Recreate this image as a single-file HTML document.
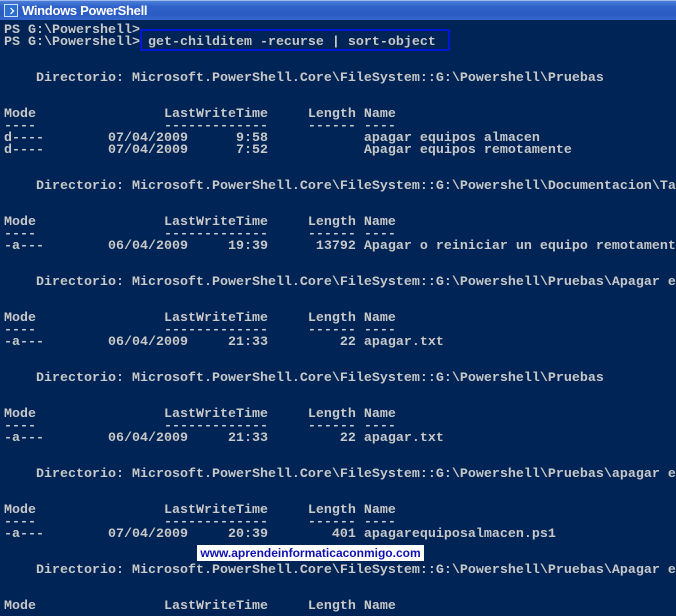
<!DOCTYPE html>
<html><head><meta charset="utf-8"><style>
html,body{margin:0;padding:0;width:676px;height:616px;overflow:hidden;background:#012456;}
#title{position:absolute;left:0;top:0;width:676px;height:20px;background:linear-gradient(180deg,#4a7ed8 0%,#2f62c8 30%,#2a5bc2 70%,#3567cf 100%);border-top:1px solid #9db9eb;box-sizing:border-box;}
#title span{position:absolute;left:22px;top:2px;font:bold 13px "Liberation Sans",sans-serif;color:#fff;letter-spacing:-0.3px;}
#icon{position:absolute;left:4px;top:3px;width:14px;height:13px;background:#2d6fd0;border:1px solid #cfe0ff;box-sizing:border-box;}
#icon:after{content:"";position:absolute;left:2px;top:2px;width:6px;height:6px;border-right:2px solid #fff;border-top:2px solid #fff;transform:rotate(45deg) scale(.6);}
#sep{position:absolute;left:0;top:20px;width:676px;height:2px;background:#b8c4d8;}
pre{position:absolute;left:4px;top:25px;margin:0;font:bold 13.33px/12px "Liberation Mono",monospace;color:#c8c8c8;white-space:pre;}
#box{position:absolute;left:140px;top:29px;width:310px;height:22px;border:2px solid #0018d8;box-sizing:border-box;border-radius:2px;}
#wm{position:absolute;left:197px;top:545px;width:227px;height:16px;background:#fff;font:bold 12px/16px "Liberation Sans",sans-serif;color:#1010b0;text-align:center;}
</style></head><body>
<div id="title"><div id="icon"></div><span>Windows PowerShell</span></div>
<pre>PS G:\Powershell&gt;
PS G:\Powershell&gt; get-childitem -recurse | sort-object


    Directorio: Microsoft.PowerShell.Core\FileSystem::G:\Powershell\Pruebas


Mode                LastWriteTime     Length Name
----                -------------     ------ ----
d----        07/04/2009      9:58            apagar equipos almacen
d----        07/04/2009      7:52            Apagar equipos remotamente


    Directorio: Microsoft.PowerShell.Core\FileSystem::G:\Powershell\Documentacion\Ta


Mode                LastWriteTime     Length Name
----                -------------     ------ ----
-a---        06/04/2009     19:39      13792 Apagar o reiniciar un equipo remotament


    Directorio: Microsoft.PowerShell.Core\FileSystem::G:\Powershell\Pruebas\Apagar e


Mode                LastWriteTime     Length Name
----                -------------     ------ ----
-a---        06/04/2009     21:33         22 apagar.txt


    Directorio: Microsoft.PowerShell.Core\FileSystem::G:\Powershell\Pruebas


Mode                LastWriteTime     Length Name
----                -------------     ------ ----
-a---        06/04/2009     21:33         22 apagar.txt


    Directorio: Microsoft.PowerShell.Core\FileSystem::G:\Powershell\Pruebas\apagar e


Mode                LastWriteTime     Length Name
----                -------------     ------ ----
-a---        07/04/2009     20:39        401 apagarequiposalmacen.ps1


    Directorio: Microsoft.PowerShell.Core\FileSystem::G:\Powershell\Pruebas\Apagar e


Mode                LastWriteTime     Length Name</pre>
<div id="box"></div>
<div id="wm">www.aprendeinformaticaconmigo.com</div>
</body></html>
